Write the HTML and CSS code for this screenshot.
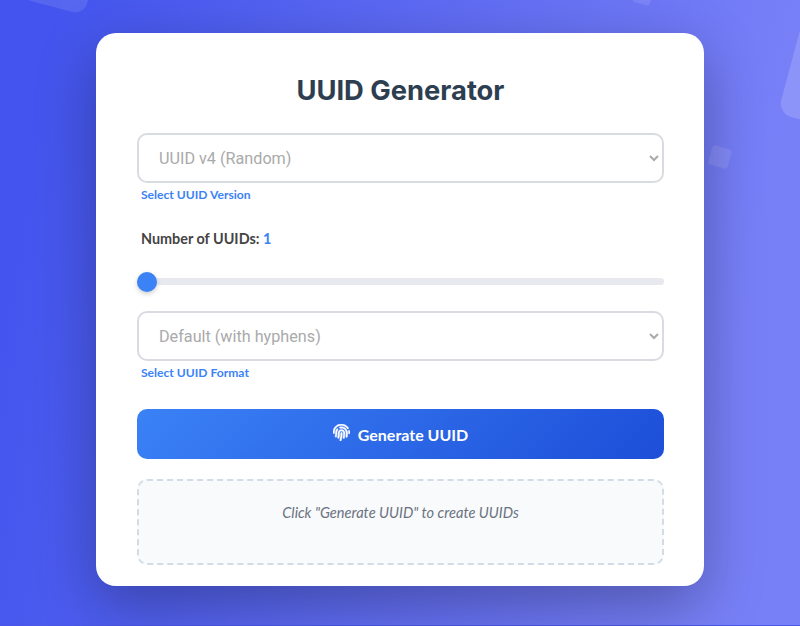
FILE: index.html
```html
<!DOCTYPE html>
<html lang="en">
<head>
<meta charset="utf-8">
<title>UUID Generator</title>
<link rel="stylesheet" href="styles.css">
</head>
<body>
<div class="backdrop">
  <div class="shape shape-a"></div>
  <div class="shape shape-b"></div>
  <div class="shape shape-c"></div>
  <div class="shape shape-d"></div>
</div>
<main class="card">
  <h1 class="title">UUID Generator</h1>
  <div class="field">
    <select class="select"><option>UUID v4 (Random)</option></select>
    <small class="hint">Select UUID Version</small>
  </div>
  <div class="count">
    <label class="count-label">Number of UUIDs: <span class="count-value">1</span></label>
    <input class="range" type="range" min="1" max="100" value="1">
  </div>
  <div class="field">
    <select class="select"><option>Default (with hyphens)</option></select>
    <small class="hint">Select UUID Format</small>
  </div>
  <button class="generate" type="button">
    <svg class="icon" viewBox="0 0 512 512" aria-hidden="true"><path fill="currentColor" stroke="currentColor" stroke-width="12" d="M256.12 245.96c-13.25 0-24 10.74-24 24 1.14 72.25-8.14 141.9-27.7 211.55-2.73 9.72 2.15 30.49 23.12 30.49 10.48 0 20.11-6.92 23.09-17.52 13.53-47.91 31.04-125.41 29.48-224.52.01-13.25-10.73-24-23.99-24zm-.86-81.73C194 164.16 151.25 211.3 152.1 265.32c.75 47.94-3.75 95.91-13.37 142.55-2.69 12.98 5.67 25.69 18.64 28.36 13.05 2.67 25.67-5.66 28.36-18.64 10.34-50.09 15.17-101.58 14.37-153.02-.41-25.95 19.92-52.49 54.45-52.34 31.31.47 57.15 25.34 57.62 55.47.77 48.05-2.81 96.33-10.61 143.55-2.17 13.06 6.69 25.42 19.76 27.58 19.97 3.33 26.81-15.1 27.58-19.77 8.28-50.03 12.06-101.21 11.27-152.11-.88-55.8-47.94-101.88-104.91-102.72zm-110.69-19.78c-10.3-8.34-25.37-6.8-33.76 3.48-25.62 31.5-39.39 71.28-38.75 112 .59 37.58-2.47 75.27-9.11 112.05-2.34 13.05 6.31 25.53 19.36 27.89 20.11 3.5 27.07-14.81 27.89-19.36 7.19-39.84 10.5-80.66 9.86-121.33-.47-29.88 9.2-57.88 28-80.97 8.35-10.28 6.79-25.39-3.49-33.76zm109.47-62.33c-15.41-.41-30.87 1.44-45.78 4.97-12.89 3.06-20.87 15.98-17.83 28.89 3.06 12.89 16 20.83 28.89 17.83 11.05-2.61 22.47-3.77 34-3.69 75.43 1.13 137.73 61.5 138.88 134.58.59 37.88-1.28 76.11-5.58 113.63-1.5 13.17 7.95 25.08 21.11 26.58 16.72 1.95 25.51-11.88 26.58-21.11a929.06 929.06 0 0 0 5.89-119.85c-1.56-98.75-85.07-180.33-186.16-181.83zm252.07 121.45c-2.86-12.92-15.51-21.2-28.61-18.27-12.94 2.86-21.12 15.66-18.26 28.61 4.71 21.41 4.91 37.41 4.7 61.6-.11 13.27 10.55 24.09 23.8 24.2h.2c13.17 0 23.89-10.61 24-23.8.18-22.18.4-44.11-5.83-72.34zm-40.12-90.72C417.29 43.46 337.6 1.29 252.81.02 183.02-.82 118.47 24.91 70.46 72.94 24.09 119.37-.9 181.04.14 246.65l-.12 21.47c-.39 13.25 10.03 24.31 23.28 24.69.23.02.48.02.72.02 12.92 0 23.59-10.3 23.97-23.3l.16-23.64c-.83-52.5 19.16-101.86 56.28-139 38.76-38.8 91.34-59.67 147.68-58.86 69.45 1.03 134.73 35.56 174.62 92.39 7.61 10.86 22.56 13.45 33.42 5.86 10.84-7.62 13.46-22.59 5.84-33.43z"/></svg>
    <span>Generate UUID</span>
  </button>
  <div class="result"><p class="placeholder">Click "Generate UUID" to create UUIDs</p></div>
</main>
</body>
</html>
```
FILE: styles.css
```css
* { box-sizing: border-box; }
html, body { height: 100%; }
body {
  margin: 0;
  height: 626px;
  overflow: hidden;
  position: relative;
  display: flex;
  align-items: flex-start;
  justify-content: center;
  padding-top: 33px;
  background: linear-gradient(100deg, #4355ee 6%, #7880f8 88%);
  font-family: "Lato", sans-serif;
}
.backdrop { position: absolute; inset: 0; overflow: hidden; border-bottom: 1px solid #4a58ea; }
.shape { position: absolute; background: rgba(255,255,255,.1); transform: rotate(15deg); }
.shape-a { left: 22px; top: -61px; width: 72px; height: 68px; border-radius: 12px; }
.shape-b { left: 634px; top: -14px; width: 18px; height: 18px; border-radius: 3px; }
.shape-c { left: 789px; top: 28px; width: 100px; height: 100px; border-radius: 14px; background: rgba(255,255,255,.16); }
.shape-d { left: 710px; top: 147px; width: 20px; height: 20px; border-radius: 3px; }
.card {
  position: relative;
  width: 608px;
  height: 553px;
  padding: 41px 40px 20px 41px;
  background: #fff;
  border-radius: 20px;
  box-shadow: 0 20px 60px rgba(0,0,0,.3);
}
.title {
  margin: 0 0 25px;
  text-align: center;
  font-family: "Inter", sans-serif;
  font-size: 27.3px;
  line-height: 34px;
  font-weight: 700;
  color: #2c3e50;
}
.field { display: flex; flex-direction: column; }
.select {
  width: 100%;
  height: 50px;
  padding: 0 16px;
  border: 2px solid #d8dce0;
  border-radius: 10px;
  background: #fff;
  color: #aaa;
  font-family: Roboto, sans-serif;
  font-size: 16.2px;
}
.hint {
  margin: 3px 0 0 4px;
  font-size: 12.1px;
  line-height: 17px;
  font-weight: 700;
  color: #3b82f6;
}
.count { margin-top: 27px; }
.count-label {
  display: block;
  margin-left: 4px;
  font-size: 14.4px;
  line-height: 18px;
  font-weight: 700;
  color: #444;
}
.count-value { color: #3b82f6; }
.range {
  display: block;
  appearance: none;
  width: 100%;
  height: 7px;
  margin: 30px 0 26px;
  border-radius: 4px;
  background: #e8e8ef;
}
.range::-webkit-slider-thumb {
  appearance: none;
  width: 20px;
  height: 20px;
  border-radius: 50%;
  background: #3b82f6;
  box-shadow: 0 2px 5px rgba(0,0,0,.2);
}
.generate {
  display: flex;
  align-items: center;
  justify-content: center;
  gap: 8px;
  width: 100%;
  height: 50px;
  margin-top: 28px;
  border: 0;
  border-radius: 10px;
  background: linear-gradient(135deg, #3b82f6, #1d4ed8);
  color: #fff;
  font-family: "Lato", sans-serif;
  font-size: 16px;
  font-weight: 700;
}
.icon { width: 17px; height: 17px; margin-top: -4px; }
.result {
  display: flex;
  align-items: center;
  justify-content: center;
  height: 86px;
  margin-top: 20px;
  border: 2px dashed #d3dce6;
  border-radius: 10px;
  background: #f8fafc;
}
.placeholder {
  margin: 0 0 20px;
  font-size: 14.6px;
  font-style: italic;
  color: #6b7280;
}
```
